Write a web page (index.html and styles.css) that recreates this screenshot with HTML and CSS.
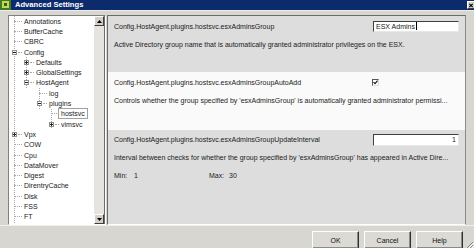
FILE: index.html
```html
<!DOCTYPE html>
<html>
<head>
<title>Advanced Settings</title>
<link rel="stylesheet" href="styles.css">
</head>
<body>
<div class="dialog">
  <div class="titlebar">
    <svg class="titlebar__icon" width="12" height="10" viewBox="0 0 12 10">
      <rect x="0" y="0" width="11" height="10" fill="#3d7a2a"/>
      <rect x="2" y="1" width="7" height="7" fill="#c8d84a"/>
      <rect x="4" y="3" width="3" height="3" fill="#2f5f1f"/>
    </svg>
    <span class="titlebar__text">Advanced Settings</span>
    <span class="titlebar__close">
      <svg width="7" height="7" viewBox="0 0 7 7"><path d="M1.5 1.5 L5.5 5.5 M5.5 1.5 L1.5 5.5" stroke="#000" stroke-width="1.2"/></svg>
    </span>
  </div>

  <div class="content">
    <div class="tree-panel">
      <div class="tree">
        <div class="group group--0">
          <div class="row"><span class="conn"></span><span class="label">Annotations</span></div>
          <div class="row"><span class="conn"></span><span class="label">BufferCache</span></div>
          <div class="row"><span class="conn"></span><span class="label">CBRC</span></div>
          <div class="row"><span class="conn conn--box"><i class="box"></i></span><span class="label">Config</span></div>
          <div class="group group--1">
            <div class="row row--1"><span class="conn conn--box"><i class="box box--plus"></i></span><span class="label">Defaults</span></div>
            <div class="row row--1"><span class="conn conn--box"><i class="box box--plus"></i></span><span class="label">GlobalSettings</span></div>
            <div class="row row--1"><span class="conn conn--box"><i class="box"></i></span><span class="label">HostAgent</span></div>
          </div>
          <div class="group group--2">
            <div class="row row--2"><span class="conn"></span><span class="label">log</span></div>
            <div class="row row--2"><span class="conn conn--box"><i class="box"></i></span><span class="label">plugins</span></div>
          </div>
          <div class="group group--3">
            <div class="row row--3"><span class="conn"></span><span class="label label--selected">hostsvc</span></div>
            <div class="row row--3"><span class="conn conn--box"><i class="box box--plus"></i></span><span class="label">vimsvc</span></div>
          </div>
          <div class="row"><span class="conn conn--box"><i class="box box--plus"></i></span><span class="label">Vpx</span></div>
          <div class="row"><span class="conn"></span><span class="label">COW</span></div>
          <div class="row"><span class="conn"></span><span class="label">Cpu</span></div>
          <div class="row"><span class="conn"></span><span class="label">DataMover</span></div>
          <div class="row"><span class="conn"></span><span class="label">Digest</span></div>
          <div class="row"><span class="conn"></span><span class="label">DirentryCache</span></div>
          <div class="row"><span class="conn"></span><span class="label">Disk</span></div>
          <div class="row"><span class="conn"></span><span class="label">FSS</span></div>
          <div class="row"><span class="conn"></span><span class="label">FT</span></div>
          <div class="row"><span class="conn"></span></div>
        </div>
      </div>
      <div class="scrollbar">
        <div class="scrollbar__btn">
          <svg width="5" height="3" viewBox="0 0 5 3"><path d="M2.5 0 L5 3 L0 3 Z" fill="#000"/></svg>
        </div>
        <div class="scrollbar__track"></div>
        <div class="scrollbar__btn">
          <svg width="5" height="3" viewBox="0 0 5 3"><path d="M0 0 L5 0 L2.5 3 Z" fill="#000"/></svg>
        </div>
      </div>
    </div>

    <div class="settings">
      <div class="setting setting--grey setting--first">
        <div class="setting__head">
          <span class="setting__name">Config.HostAgent.plugins.hostsvc.esxAdminsGroup</span>
          <div class="field">ESX Admins<span class="field__caret"></span></div>
        </div>
        <div class="setting__desc">Active Directory group name that is automatically granted administrator privileges on the ESX.</div>
      </div>

      <div class="setting setting--white">
        <div class="setting__head">
          <span class="setting__name">Config.HostAgent.plugins.hostsvc.esxAdminsGroupAutoAdd</span>
          <span class="check">
            <svg width="5" height="5" viewBox="0 0 5 5"><path d="M0.5 2 L2 3.7 L4.6 0.6" fill="none" stroke="#111" stroke-width="1.1"/></svg>
          </span>
        </div>
        <div class="setting__desc">Controls whether the group specified by 'esxAdminsGroup' is automatically granted administrator permissi...</div>
      </div>

      <div class="setting setting--grey setting--last">
        <div class="setting__head">
          <span class="setting__name">Config.HostAgent.plugins.hostsvc.esxAdminsGroupUpdateInterval</span>
          <div class="field field--number">1</div>
        </div>
        <div class="setting__desc">Interval between checks for whether the group specified by 'esxAdminsGroup' has appeared in Active Dire...</div>
        <div class="minmax">
          <span class="minmax__item"><span class="minmax__label">Min:</span>1</span>
          <span class="minmax__item"><span class="minmax__label">Max:</span>30</span>
        </div>
      </div>
    </div>
  </div>

  <div class="footer">
    <button class="btn">OK</button>
    <button class="btn">Cancel</button>
    <button class="btn">Help</button>
    <svg class="grip" width="8" height="8" viewBox="0 0 8 8">
      <path d="M7 1 L1 7 M7 4 L4 7" stroke="#888" stroke-width="1"/>
      <path d="M8 2 L2 8 M8 5 L5 8" stroke="#fff" stroke-width="1"/>
    </svg>
  </div>
</div>
</body>
</html>
```

FILE: styles.css
```css
html, body {
  margin: 0;
  padding: 0;
}

body {
  font-family: "Liberation Sans", Arial, sans-serif;
  font-size: 7px;
  color: #1a1a1a;
  background: #d8d6d0;
}

.dialog {
  width: 474px;
  height: 248px;
  display: flex;
  flex-direction: column;
  overflow: hidden;
  background: #d8d6d0;
}

/* title bar */
.titlebar {
  height: 10px;
  flex: none;
  display: flex;
  align-items: center;
  background: #0c2b6c;
  border-bottom: 1px solid #eeece6;
  color: #fff;
  font-weight: bold;
  font-size: 7.6px;
}

.titlebar__icon {
  flex: none;
}

.titlebar__text {
  margin-left: 3px;
  line-height: 10px;
}

.titlebar__close {
  margin-left: auto;
  margin-right: -1px;
  width: 8px;
  height: 8px;
  background: #d4d0c8;
  border: 1px solid;
  border-color: #fff #404040 #404040 #fff;
  box-sizing: border-box;
  display: flex;
  align-items: center;
  justify-content: center;
}

/* main area */
.content {
  height: 214px;
  flex: none;
  box-sizing: border-box;
  padding: 4px 8px 0 8px;
  display: flex;
  gap: 1px;
}

.tree-panel {
  width: 98px;
  flex: none;
  display: flex;
  box-sizing: border-box;
  border: 1px solid;
  border-color: #808080 #fff #fff #808080;
  overflow: hidden;
}

.tree {
  flex: 1;
  background: #fff;
  overflow: hidden;
}

.group {
  background-image: linear-gradient(#a8a8a8 50%, transparent 50%);
  background-size: 1px 2px;
  background-repeat: repeat-y;
}

.group--0 { background-position: 5px 0; }
.group--1 { background-position: 17px 0; }
.group--2 { background-position: 30px 0; }
.group--3 { background-position: 42px 0; }

.row {
  height: 10.3px;
  display: flex;
  align-items: center;
  padding-left: 1px;
  white-space: nowrap;
}

.row--1 { padding-left: 13px; }
.row--2 { padding-left: 26px; }
.row--3 { padding-left: 38px; }

.conn {
  width: 13px;
  flex: none;
  display: flex;
  align-items: center;
}

.conn::after {
  content: "";
  width: 8px;
  margin-left: auto;
  margin-right: 1px;
  border-top: 1px dotted #a8a8a8;
}

.conn--box::after {
  width: 4px;
}

.box {
  width: 5px;
  height: 5px;
  margin-left: 2px;
  box-sizing: border-box;
  border: 1px solid #909090;
  background:
    linear-gradient(#222, #222) center / 3px 1px no-repeat,
    #fff;
}

.box--plus {
  background:
    linear-gradient(#222, #222) center / 3px 1px no-repeat,
    linear-gradient(#222, #222) center / 1px 3px no-repeat,
    #fff;
}

.label {
  line-height: 9px;
  padding: 0 1px;
}

.label--selected {
  border: 1px solid #a0a0a0;
  padding: 0 2px;
  margin-left: -2px;
}

.scrollbar {
  width: 10px;
  flex: none;
  display: flex;
  flex-direction: column;
  background: #e6e4df;
  border-right: 1px solid #6a6a6a;
}

.scrollbar__btn {
  height: 10px;
  flex: none;
  box-sizing: border-box;
  background: #d4d0c8;
  border: 1px solid;
  border-color: #fff #404040 #404040 #fff;
  display: flex;
  align-items: center;
  justify-content: center;
}

.scrollbar__track {
  flex: 1;
}

/* settings list */
.settings {
  flex: 1;
  display: flex;
  flex-direction: column;
  box-sizing: border-box;
  border: 1px solid;
  border-color: #6a6a6a #8a8a8a #fff #6a6a6a;
  overflow: hidden;
}

.setting {
  box-sizing: border-box;
  padding: 0 6px 0 6px;
  flex: none;
}

.setting--grey { background: #dddddd; }
.setting--white { background: #fafafa; }

.setting--first { height: 56px; }
.setting--white { height: 58px; }
.setting--last { flex: 1; }

.setting__head {
  height: 20px;
  display: flex;
  align-items: center;
}

.setting--last .setting__head {
  height: 19px;
}

.setting__name {
  white-space: nowrap;
}

.setting__desc {
  margin-top: 4px;
  line-height: 9px;
  white-space: nowrap;
}

.field {
  margin-left: auto;
  width: 86px;
  height: 11px;
  box-sizing: border-box;
  background: #fff;
  border: 1px solid;
  border-color: #404040 #e8e8e8 #e8e8e8 #404040;
  padding: 0 2px;
  line-height: 9px;
  display: flex;
  align-items: center;
}

.setting--last .field {
  height: 12px;
}

.field__caret {
  width: 1px;
  height: 8px;
  background: #000;
  margin-left: 1px;
}

.field--number {
  justify-content: flex-end;
}

.check {
  margin-left: auto;
  margin-right: 80px;
  width: 7px;
  height: 7px;
  box-sizing: border-box;
  border: 1px solid;
  border-color: #555 #e0e0e0 #e0e0e0 #555;
  background: #fff;
  display: flex;
  align-items: center;
  justify-content: center;
}

.minmax {
  margin-top: 9px;
  display: flex;
  line-height: 9px;
}

.minmax__item {
  width: 95px;
}

.minmax__label {
  display: inline-block;
  width: 20px;
}

/* buttons */
.footer {
  flex: 1;
  display: flex;
  align-items: flex-start;
  justify-content: flex-end;
  gap: 6px;
  padding-top: 5px;
  border-top: 1px solid #f2f0ea;
}

.btn {
  width: 47px;
  height: 18px;
  margin: 0;
  padding: 0;
  font-family: inherit;
  font-size: 7px;
  color: #111;
  background: #dcdad4;
  border: 1px solid;
  border-color: #fff #303030 #303030 #fff;
  box-shadow: inset -1px -1px #8a8a8a;
}

.btn + .btn {
  margin-left: -1px;
}

.grip {
  align-self: flex-end;
  margin-left: -3px;
}
```
